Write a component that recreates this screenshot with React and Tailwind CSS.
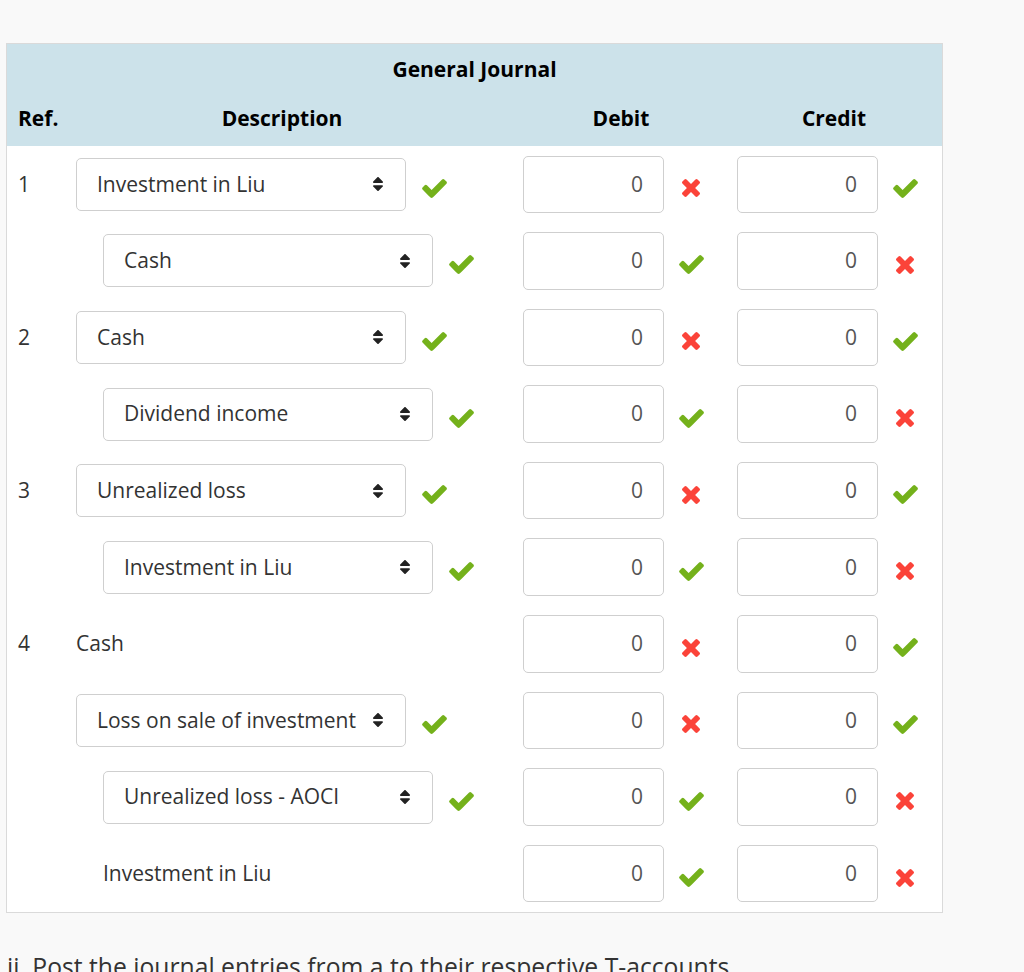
import { FaSort } from "react-icons/fa";

const rows = [
  { ref: "1", desc: "Investment in Liu", indent: false, select: true, mark: "ok", debit: "bad", credit: "ok" },
  { ref: "", desc: "Cash", indent: true, select: true, mark: "ok", debit: "ok", credit: "bad" },
  { ref: "2", desc: "Cash", indent: false, select: true, mark: "ok", debit: "bad", credit: "ok" },
  { ref: "", desc: "Dividend income", indent: true, select: true, mark: "ok", debit: "ok", credit: "bad" },
  { ref: "3", desc: "Unrealized loss", indent: false, select: true, mark: "ok", debit: "bad", credit: "ok" },
  { ref: "", desc: "Investment in Liu", indent: true, select: true, mark: "ok", debit: "ok", credit: "bad" },
  { ref: "4", desc: "Cash", indent: false, select: false, mark: null, debit: "bad", credit: "ok" },
  { ref: "", desc: "Loss on sale of investment", indent: false, select: true, mark: "ok", debit: "bad", credit: "ok" },
  { ref: "", desc: "Unrealized loss - AOCI", indent: true, select: true, mark: "ok", debit: "ok", credit: "bad" },
  { ref: "", desc: "Investment in Liu", indent: true, select: false, mark: null, debit: "ok", credit: "bad" },
];

function CheckIcon() {
  return (
    <svg viewBox="121 334 1550 1188" className="h-[19px] w-[25px] fill-[#74b11b]">
      <path d="M1671 566q0 40-28 68l-724 724-136 136q-28 28-68 28t-68-28l-136-136-362-362q-28-28-28-68t28-68l136-136q28-28 68-28t68 28l294 295 656-657q28-28 68-28t68 28l136 136q28 28 28 68z" />
    </svg>
  );
}

function CrossIcon() {
  return (
    <svg viewBox="110 366 1188 1188" className="h-[18px] w-[18px] fill-[#fb4339]">
      <path d="M1298 1322q0 40-28 68l-136 136q-28 28-68 28t-68-28l-294-294-294 294q-28 28-68 28t-68-28l-136-136q-28-28-28-68t28-68l294-294-294-294q-28-28-28-68t28-68l136-136q28-28 68-28t68 28l294 294 294-294q28-28 68-28t68 28l136 136q28 28 28 68t-28 68l-294 294 294 294q28 28 28 68z" />
    </svg>
  );
}

function Mark({ type }) {
  return (
    <div className="ml-[14px] flex h-[26px] w-[26px] items-center justify-center pt-[8px]">
      {type === "ok" && <CheckIcon />}
      {type === "bad" && <CrossIcon />}
    </div>
  );
}

function Amount({ mark }) {
  return (
    <div className="flex items-center">
      <div className="flex h-[57.6px] w-[141px] items-center justify-end rounded-[5px] border border-[#cfcfcf] bg-white pr-[20px] text-[21px] text-[#555]">
        0
      </div>
      <Mark type={mark} />
    </div>
  );
}

export default function App() {
  return (
    <div
      className="min-h-[972px] overflow-hidden bg-[#f9f9f9] pl-[6px] pt-[43px] text-[#333]"
      style={{ fontFamily: "'Open Sans', sans-serif" }}
    >
      <div className="w-[937px] border border-[#dadada] bg-white">
        <div className="h-[102px] bg-[#cce2ea] text-[21px] font-bold text-black">
          <div className="pt-[11px] text-center leading-[28px]">General Journal</div>
          <div className="mt-[21px] flex leading-[28px]">
            <div className="w-[69px] pl-[11px]">Ref.</div>
            <div className="w-[412px] text-center">Description</div>
            <div className="ml-[22px] w-[222px] text-center">Debit</div>
            <div className="w-[204px] text-center">Credit</div>
          </div>
        </div>
        {rows.map((r, i) => (
          <div key={i} className="flex h-[76.6px] items-center text-[21px]">
            <div className="w-[69px] pl-[11px]">{r.ref}</div>
            <div className="flex w-[447px] items-center">
              <div className={r.indent ? "ml-[27px] flex items-center" : "flex items-center"}>
                {r.select ? (
                  <>
                    <div className="flex h-[53px] w-[330px] items-center justify-between rounded-[5px] border border-[#cfcfcf] bg-white pl-[20px] pr-[21px]">
                      <span>{r.desc}</span>
                      <FaSort className="h-[18px] w-[12px] text-[#222]" />
                    </div>
                    <div className="ml-[1px]">
                      <Mark type={r.mark} />
                    </div>
                  </>
                ) : (
                  <span>{r.desc}</span>
                )}
              </div>
            </div>
            <div className="w-[214px]">
              <Amount mark={r.debit} />
            </div>
            <Amount mark={r.credit} />
          </div>
        ))}
      </div>
      <p className="mt-[38px] whitespace-nowrap pl-[1px] text-[24.7px] leading-[32px] text-[#333]">
        ii. Post the journal entries from a to their respective T-accounts.
      </p>
    </div>
  );
}
